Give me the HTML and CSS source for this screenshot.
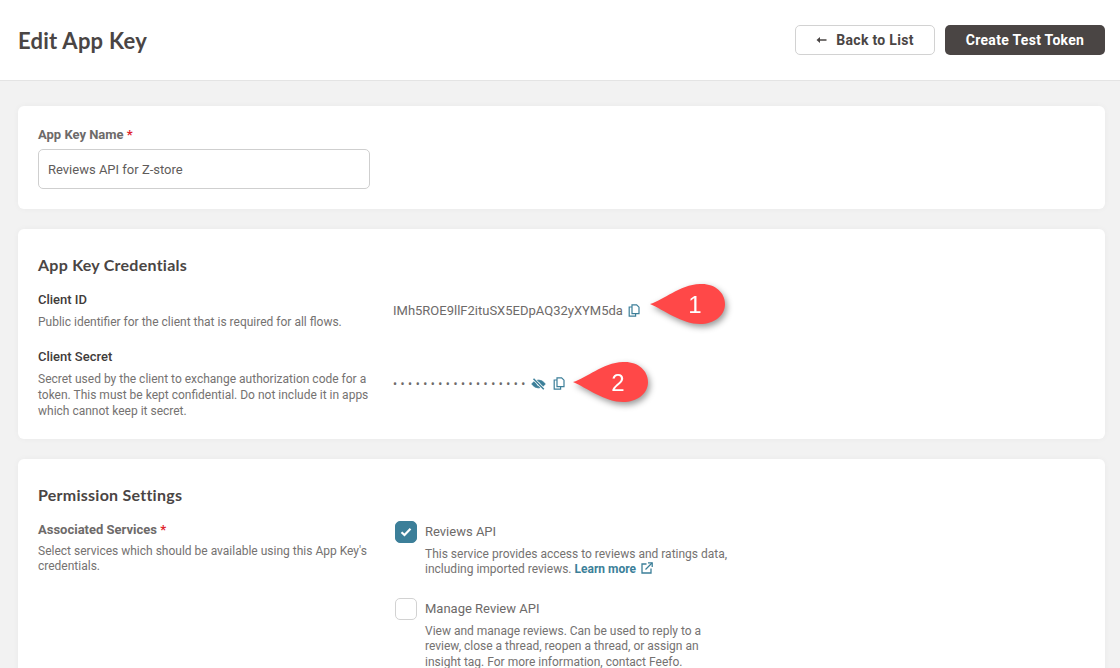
FILE: index.html
```html
<!DOCTYPE html>
<html lang="en">
<head>
<meta charset="utf-8">
<title>Edit App Key</title>
<link rel="stylesheet" href="styles.css">
</head>
<body>
<header class="topbar">
  <h1 class="page-title">Edit App Key</h1>
  <div class="actions">
    <button class="btn btn-outline"><svg class="back-arrow" width="11" height="8" viewBox="0 0 11 8"><path d="M0.5 4 L4 1 V3.2 H10.5 V4.8 H4 V7 Z" fill="#4a4544"/></svg>Back to List</button>
    <button class="btn btn-dark">Create Test Token</button>
  </div>
</header>
<main class="content">
  <section class="card card-name">
    <label class="label-muted">App Key Name <span class="req">*</span></label>
    <div class="input">Reviews API for Z-store</div>
  </section>

  <section class="card card-creds">
    <h2 class="section-title">App Key Credentials</h2>
    <div class="row row-id">
      <div class="col-left">
        <div class="label-dark">Client ID</div>
        <p class="help">Public identifier for the client that is required for all flows.</p>
      </div>
      <div class="col-right value-line">
        <span class="value">IMh5ROE9llF2ituSX5EDpAQ32yXYM5da</span>
        <svg class="icon" width="12" height="13" viewBox="0 0 12 13" fill="none" stroke="#3c7f99" stroke-width="1.2"><path d="M4 .8h4.6L11 3.2V9.6H4z"/><path d="M4 3H1.2v9.2H7.6V9.6"/></svg>
      </div>
    </div>
    <div class="row row-secret">
      <div class="col-left">
        <div class="label-dark">Client Secret</div>
        <p class="help">Secret used by the client to exchange authorization code for a token. This must be kept confidential. Do not include it in apps which cannot keep it secret.</p>
      </div>
      <div class="col-right secret-line">
        <span class="dots">&bull;&bull;&bull;&bull;&bull;&bull;&bull;&bull;&bull;&bull;&bull;&bull;&bull;&bull;&bull;&bull;&bull;&bull;</span>
        <svg class="icon-eye" width="15" height="12" viewBox="0 0 15 12" fill="none" stroke="#3c7f99"><path d="M.8 6C2.4 3.6 4.8 2.2 7.5 2.2S12.600 3.600 14.200 6C12.600 8.400 10.200 9.800 7.500 9.800S2.400 8.400.8 6Z" fill="#3c7f99" stroke-width="1"/><circle cx="7.500" cy="6" r="1.800" fill="#fff" stroke="none"/><path d="M2.500.8 12.800 11.200" stroke="#fff" stroke-width="3"/><path d="M2.500.8 12.800 11.200" stroke-width="1.500"/></svg>
        <svg class="icon" width="12" height="13" viewBox="0 0 12 13" fill="none" stroke="#3c7f99" stroke-width="1.2"><path d="M4 .8h4.6L11 3.2V9.6H4z"/><path d="M4 3H1.2v9.2H7.6V9.6"/></svg>
      </div>
    </div>
    <div class="callout callout-1">
      <svg width="90" height="56" viewBox="0 0 90 56"><path class="drop" d="M1 21C15 17 30 2 51 1C65 0 76 9 76 21C76 33 65 41 51 41C33 41 15 27 1 21Z"/></svg>
      <span class="callout-num">1</span>
    </div>
    <div class="callout callout-2">
      <svg width="90" height="56" viewBox="0 0 90 56"><path class="drop" d="M1 21C15 17 30 2 51 1C65 0 76 9 76 21C76 33 65 41 51 41C33 41 15 27 1 21Z"/></svg>
      <span class="callout-num">2</span>
    </div>
  </section>

  <section class="card card-perms">
    <h2 class="section-title">Permission Settings</h2>
    <div class="row">
      <div class="col-left">
        <div class="label-muted">Associated Services <span class="req">*</span></div>
        <p class="help">Select services which should be available using this App Key's credentials.</p>
      </div>
      <div class="services">
        <div class="service">
          <span class="check check-on"><svg width="12" height="10" viewBox="0 0 12 10" fill="none" stroke="#fff" stroke-width="2.200"><path d="M1.500 5.200 4.500 8 10.500 1.800"/></svg></span>
          <div class="service-body">
            <div class="service-name">Reviews API</div>
            <p class="help">This service provides access to reviews and ratings data, including imported reviews. <a class="link">Learn more <svg class="ext" width="12" height="12" viewBox="0 0 12 12" fill="none" stroke="#3c7f99" stroke-width="1.300"><path d="M5.500 2H1v9h9V6.500"/><path d="M4.500 7.500 11 1"/><path d="M7 .8h4.200V5"/></svg></a></p>
          </div>
        </div>
        <div class="service">
          <span class="check"></span>
          <div class="service-body">
            <div class="service-name">Manage Review API</div>
            <p class="help">View and manage reviews. Can be used to reply to a review, close a thread, reopen a thread, or assign an insight tag. For more information, contact Feefo.</p>
          </div>
        </div>
      </div>
    </div>
  </section>
</main>
</body>
</html>
```
FILE: styles.css
```css
* { box-sizing: border-box; }
html, body { margin: 0; height: 100%; overflow: hidden; }
body {
  background: #f2f2f2;
  font-family: Roboto, "Liberation Sans", sans-serif;
  font-size: 12px;
  color: #6d6a69;
}
.topbar {
  height: 81px;
  background: #fff;
  border-bottom: 1px solid #e4e4e4;
  display: flex;
  align-items: center;
  justify-content: space-between;
  padding: 0 15px 0 18px;
}
.page-title {
  margin: 0;
  font-family: Lato, sans-serif;
  font-size: 22px;
  font-weight: 700;
  letter-spacing: .25px;
  color: #4a4544;
}
.actions { display: flex; gap: 10px; }
.btn {
  height: 30px;
  border-radius: 5px;
  font-family: Roboto, sans-serif;
  font-size: 14px;
  font-weight: 700;
  letter-spacing: .3px;
  display: flex;
  align-items: center;
  justify-content: center;
  padding: 0;
}
.btn-outline { width: 140px; background: #fff; border: 1px solid #d2d2d2; color: #4a4544; }
.back-arrow { margin-right: 9px; }
.btn-dark { width: 160px; background: #4a4544; border: 0; color: #fff; }
.content {
  padding: 25px 15px 0 18px;
  display: flex;
  flex-direction: column;
  gap: 20px;
}
.card {
  position: relative;
  background: #fff;
  border-radius: 6px;
  box-shadow: 0 0 6px rgba(0,0,0,.04);
  padding: 20px;
  flex: none;
}
.card-name { height: 103px; }
.card-creds { height: 210px; padding-top: 26px; }
.card-perms { height: 300px; padding-top: 26px; }
.label-muted { display: block; font-size: 13px; font-weight: 700; color: #6d6a69; line-height: 18px; }
.label-dark { font-size: 13px; font-weight: 500; color: #3f3b3a; line-height: 18px; }
.req { color: #e0232e; }
.input {
  margin-top: 5px;
  width: 332px;
  height: 40px;
  border: 1px solid #cfcfcf;
  border-radius: 5px;
  padding: 0 9px;
  display: flex;
  align-items: center;
  font-size: 13px;
  color: #5f5c5b;
}
.section-title {
  margin: 0;
  font-family: Lato, sans-serif;
  font-size: 16px;
  font-weight: 700;
  letter-spacing: .25px;
  color: #4a4544;
  line-height: 20px;
}
.row { display: flex; }
.col-left { width: 355px; flex: none; }
.help { margin: 5px 0 0; font-size: 12px; line-height: 16px; color: #757271; }
.row-id { margin-top: 16px; height: 57px; }
.row-secret { height: 80px; }
.value-line { display: flex; align-items: center; gap: 5px; height: 30px; padding-top: 8px; }
.value { font-size: 13px; color: #6d6a69; }
.icon { flex: none; }
.secret-line { display: flex; align-items: center; height: 57px; padding-top: 14px; }
.dots { font-size: 12px; letter-spacing: 3.500px; color: #6d6a69; width: 138px; overflow: hidden; white-space: nowrap; }
.icon-eye { margin-right: 7px; }
.callout { position: absolute; width: 90px; height: 56px; filter: drop-shadow(2px 3px 3px rgba(0,0,0,.4)); }
.callout-1 { left: 631px; top: 54px; }
.callout-2 { left: 554px; top: 132px; }
.drop { fill: #ff4848; }
.callout-num {
  position: absolute;
  left: 34px;
  top: 10px;
  width: 24px;
  text-align: center;
  font-family: "Liberation Sans", sans-serif;
  font-size: 24px;
  line-height: 24px;
  color: #fff;
}
.card-perms .row { margin-top: 16px; }
.card-perms .help { line-height: 15.500px; margin-top: 4.500px; }
.services { margin-left: 2px; width: 340px; }
.service { display: flex; gap: 8px; height: 77px; }
.check {
  width: 22px;
  height: 22px;
  flex: none;
  border: 1px solid #d2d2d2;
  border-radius: 5px;
  display: flex;
  align-items: center;
  justify-content: center;
}
.check-on { background: #3c7f99; border-color: #3c7f99; }
.service-name { font-size: 13px; line-height: 20px; padding-top: 1px; height: 21px; color: #6d6a69; }
.link { color: #3c7f99; font-weight: 700; }
.ext { vertical-align: -1px; margin-left: 2px; }
```
